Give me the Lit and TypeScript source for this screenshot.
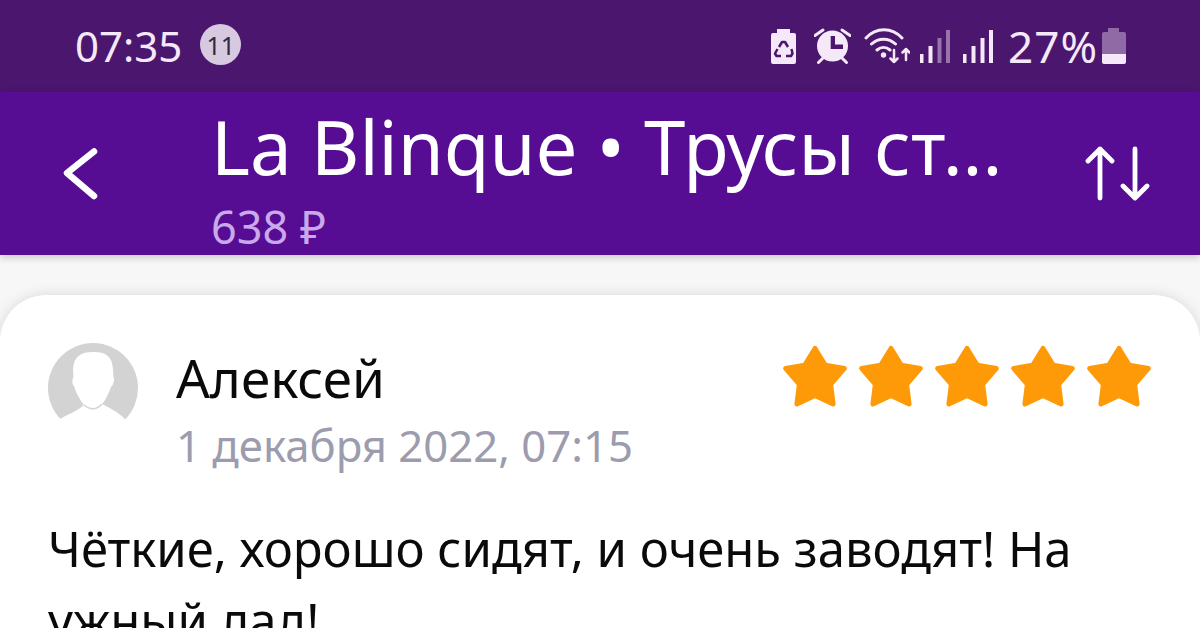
import { LitElement, html, css, svg } from 'lit';
import { customElement } from 'lit/decorators.js';

const STAR = svg`<path stroke="currentColor" stroke-width="5" stroke-linejoin="round" d="M32 3.500l10.300 16.700 19 3.200-13.700 16 2.500 19.600L32 50.500 13.900 59l2.500-19.600-13.700-16 19-3.200z"/>`;

@customElement('app-root')
export class AppRoot extends LitElement {
  static styles = css`
    :host {
      display: block;
      width: 1200px;
      height: 628px;
      overflow: hidden;
      background: #f7f7f7;
      font-family: 'Noto Sans', 'Open Sans', sans-serif;
    }
    .status {
      height: 92px;
      box-sizing: border-box;
      background: #4b166d;
      color: #f5e9f9;
      display: flex;
      align-items: center;
      padding: 0 74px 0 75px;
    }
    .time {
      font-size: 42px;
      line-height: 46px;
    }
    .badge {
      width: 41px;
      height: 41px;
      margin: -3px 0 0 18px;
      border-radius: 50%;
      background: #d7c9e0;
      color: #35283f;
      font-size: 25px;
      display: flex;
      align-items: center;
      justify-content: center;
    }
    .spacer {
      flex: 1;
    }
    .status svg {
      display: block;
      fill: currentColor;
    }
    .status-icons {
      display: flex;
      align-items: center;
    }
    .percent {
      font-size: 44px;
      line-height: 46px;
      letter-spacing: 1px;
      margin-left: 15px;
    }
    .bar {
      height: 163px;
      box-sizing: border-box;
      background: #560d94;
      display: flex;
      color: #fff;
      box-shadow: 0 2px 8px rgba(0, 0, 0, 0.22);
      position: relative;
    }
    .back {
      width: 211px;
      padding: 55px 0 0 62px;
      box-sizing: border-box;
    }
    .titles {
      width: 802px;
      padding-top: 12px;
    }
    .title {
      font-size: 74.400px;
      line-height: 84px;
      white-space: nowrap;
    }
    .price {
      font-size: 45px;
      line-height: 50px;
      margin-top: 14px;
      color: #c9a9ea;
    }
    .sort {
      padding: 53px 0 0 71px;
    }
    svg.line {
      display: block;
      fill: none;
      stroke: currentColor;
      stroke-linecap: round;
      stroke-linejoin: round;
    }
    .card {
      margin-top: 40px;
      height: 400px;
      background: #fff;
      border-radius: 46px 46px 0 0;
      box-shadow: 0 0 14px rgba(0, 0, 0, 0.13);
      padding: 48px 49px 0 48px;
      box-sizing: border-box;
    }
    .head {
      display: flex;
    }
    .avatar {
      width: 90px;
      height: 90px;
      display: block;
    }
    .who {
      margin-left: 38px;
      flex: 1;
    }
    .name {
      font-size: 53px;
      line-height: 60px;
      margin-top: 5px;
      color: #0a0a0a;
    }
    .date {
      font-size: 43.700px;
      line-height: 50px;
      margin-top: 12px;
      color: #9c9cae;
    }
    .stars {
      display: flex;
      gap: 12px;
      margin-top: 2px;
      color: #fe9a08;
    }
    .stars svg {
      display: block;
      width: 64px;
      height: 62px;
      fill: currentColor;
    }
    .text {
      margin-top: 42px;
      font-size: 49px;
      line-height: 72px;
      color: #0a0a0a;
      width: 1100px;
    }
  `;

  render() {
    return html`
      <div class="status">
        <span class="time">07:35</span>
        <span class="badge">11</span>
        <span class="spacer"></span>
        <div class="status-icons">
          <svg width="25" height="35" viewBox="0 0 25 35">
            <path d="M6 0h13v4h4a2 2 0 0 1 2 2v27a2 2 0 0 1-2 2H2a2 2 0 0 1-2-2V6a2 2 0 0 1 2-2h4z"/>
            <path fill="none" stroke="#4b166d" stroke-width="2.500" stroke-linejoin="round" d="M8 18l3-5h3l3 5M6.500 20l-2.500 4.500 1.500 2.500h4.500M20.500 20l1 4.500-1.500 2.500h-5"/>
          </svg>
          <svg style="margin-left:18px" width="37" height="36" viewBox="0 0 37 36">
            <path fill-rule="evenodd" d="M18.500 2.500a15.500 15.500 0 1 1 0 31 15.500 15.500 0 0 1 0-31zM16.700 8v13H29v-4.500h-8V8z"/>
            <path fill="none" stroke="currentColor" stroke-width="3" stroke-linecap="round" d="M1 7.500L9 2M36 7.500L28 2M4.500 34.500l4.500-4.500M32.500 34.500l-4.500-4.500"/>
          </svg>
          <svg class="line" style="margin-left:13px;fill:none" width="46" height="36" viewBox="0 0 46 36">
            <path d="M2 10C12 -1 28 -1 38 10M7.500 16c7-6.500 17-6.500 24 0M13 22c4-3.500 9-3.500 13 0" stroke-width="3"/>
            <circle cx="19.500" cy="27" r="2.700" fill="currentColor" stroke="none"/>
            <path d="M30 22v12M26.500 30.500l3.500 3.500 3.500-3.500M42 32V21M38.500 24.500l3.500-3.500 3.500 3.500" stroke-width="2.500"/>
          </svg>
          <svg style="margin-left:10px" width="30" height="34" viewBox="0 0 30 34">
            <rect x="0" y="25" width="3.500" height="9" />
            <rect x="8.500" y="17" width="4" height="17" />
            <rect x="17.500" y="9" width="4" height="25" opacity=".45"/>
            <rect x="26" y="1" width="4" height="33" opacity=".45"/>
          </svg>
          <svg style="margin-left:13px" width="30" height="34" viewBox="0 0 30 34">
            <rect x="0" y="25" width="3.500" height="9" />
            <rect x="8.500" y="17" width="4" height="17" />
            <rect x="17.500" y="9" width="4" height="25" />
            <rect x="26" y="1" width="4" height="33" />
          </svg>
          <span class="percent">27%</span>
          <svg style="margin-left:4px" width="24" height="36" viewBox="0 0 24 36">
            <path opacity=".4" d="M6 0h11v4h5a2 2 0 0 1 2 2v20H0V6a2 2 0 0 1 2-2h4z"/>
            <path d="M0 26h24v8a2 2 0 0 1-2 2H2a2 2 0 0 1-2-2z"/>
          </svg>
        </div>
      </div>
      <div class="bar">
        <div class="back">
          <svg class="line" width="38" height="56" viewBox="0 0 38 56">
            <path d="M32 4.500L5 26l27 23" stroke-width="6.500"/>
          </svg>
        </div>
        <div class="titles">
          <div class="title">La Blinque • Трусы ст...</div>
          <div class="price">638 ₽</div>
        </div>
        <div class="sort">
          <svg class="line" width="66" height="58" viewBox="0 0 66 58">
            <path d="M16 4v49M4 16L16 4l12 12M51 4v49M39 41l12 12 12-12" stroke-width="4.800"/>
          </svg>
        </div>
      </div>
      <div class="card">
        <div class="head">
          <svg class="avatar" viewBox="0 0 90 90">
            <circle cx="45" cy="45" r="45" fill="#d3d3d3"/>
            <path fill="#fff" d="M45 9C58 9 64 13 65 26L65.500 34C67 37 65 43 63 44C61 50 57 58 54 61C62 65 70 69 77 76V95H12V76C20 71 30 68 36 62C32 57 28 50 26 43C24 42 24 36 25.500 34L25 26C26 13 33 9 45 9Z"/>
            <path fill="none" stroke="#d3d3d3" stroke-width="1.500" d="M36 62Q46 70 54 61"/>
          </svg>
          <div class="who">
            <div class="name">Алексей</div>
            <div class="date">1 декабря 2022, 07:15</div>
          </div>
          <div class="stars">
            ${[0, 1, 2, 3, 4].map(() => html`<svg viewBox="0 0 64 62">${STAR}</svg>`)}
          </div>
        </div>
        <div class="text">Чёткие, хорошо сидят, и очень заводят! На ужный лад!</div>
      </div>
    `;
  }
}
